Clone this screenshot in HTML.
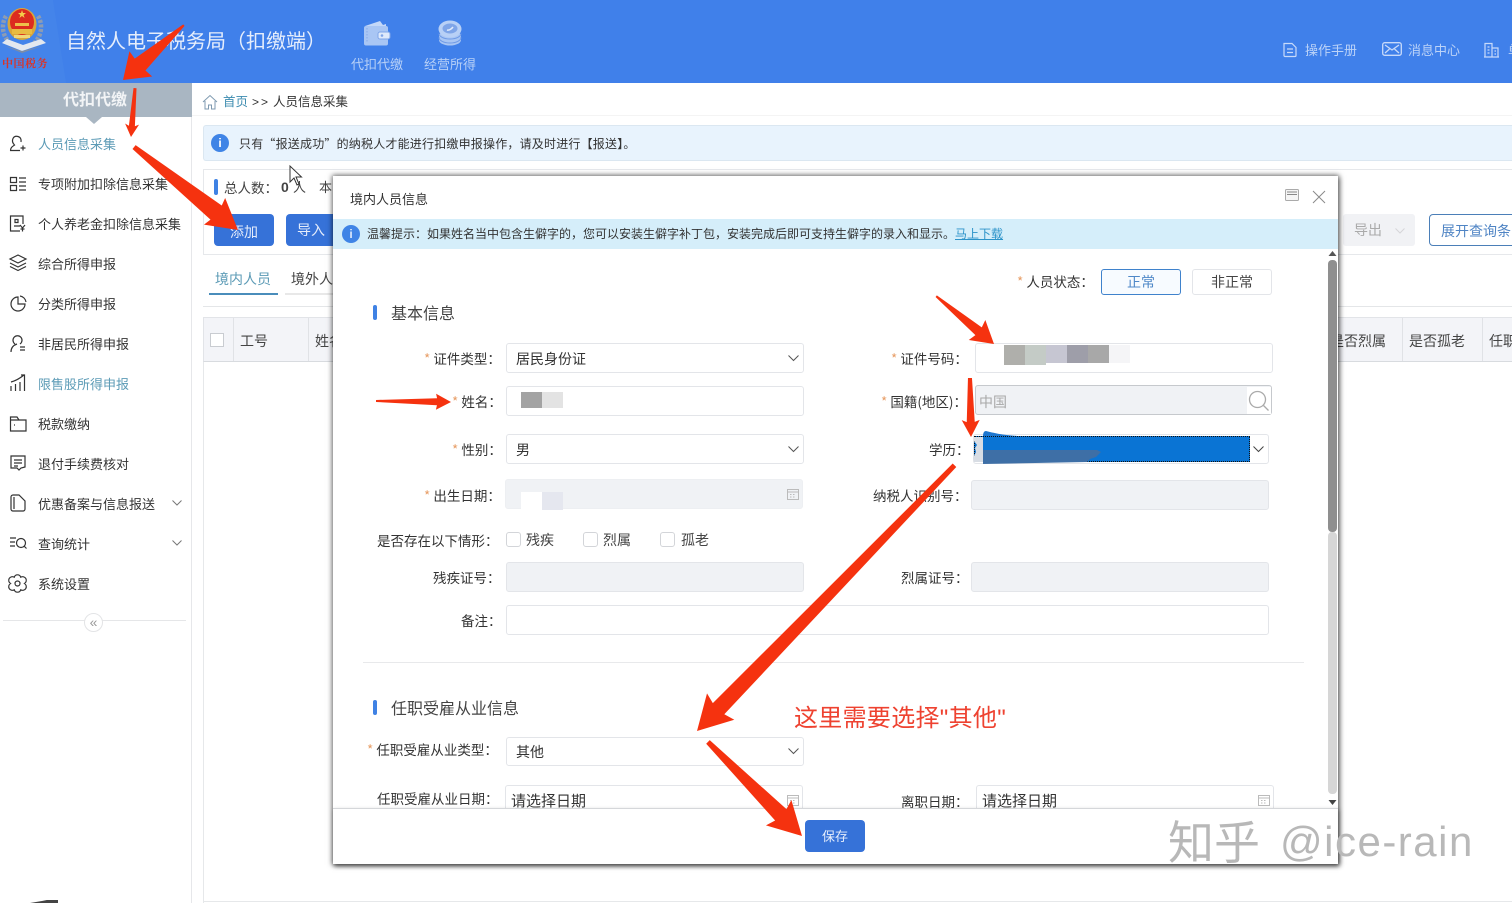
<!DOCTYPE html>
<html lang="zh-CN">
<head>
<meta charset="utf-8">
<title>自然人电子税务局（扣缴端）</title>
<style>
html,body{margin:0;padding:0;background:#fff}
body{width:1512px;height:903px;overflow:hidden;position:relative;font-family:"Liberation Sans","Noto Sans CJK SC",sans-serif;color:#333;font-size:13px}
.a{position:absolute}
.t{position:absolute;white-space:nowrap;line-height:20px}
.lab{position:absolute;white-space:nowrap;line-height:20px;color:#333;font-size:13.500px;font-family:"Noto Sans CJK TC","Noto Sans CJK SC",sans-serif;margin-top:-1px}
.lab b{color:#e8a06a;font-weight:400}
.box{position:absolute;box-sizing:border-box;background:#fff;border:1px solid #e3e5e9;border-radius:3px}
.dis{background:#f0f2f5}
.val{position:absolute;left:9px;top:15px;transform:translateY(-50%);font-size:14px;color:#333;white-space:nowrap}
svg{position:absolute;overflow:visible}
.ic{fill:none;stroke:#333;stroke-width:1.200}
.hd{position:absolute;white-space:nowrap;color:#444;font-size:16px;line-height:20px}
.sec{position:absolute;width:4px;height:15px;border-radius:2px;background:#3f82e4}
.chev{fill:none;stroke:#777;stroke-width:1}
.side{position:absolute;left:38px;white-space:nowrap;line-height:20px;color:#333}
</style>
</head>
<body>
<!-- top bar -->
<div class="a" style="left:0;top:0;width:1512px;height:83px;background:#4080ea"></div>
<div class="a" style="left:0;top:0;width:66px;height:83px;background:#4484ea;clip-path:polygon(0 0,80% 0,100% 100%,0 100%)"></div>

<svg style="left:0;top:0" width="60" height="75" viewBox="0 0 60 75">
  <path d="M6 16C1 24 2 36 10 43M38 16c5 8 4 20-4 27" fill="none" stroke="#8d9cb3" stroke-width="4.500" stroke-dasharray="3 1.500"/>
  <path d="M2 43l20 8 24-8-5-4-18 6-16-6z" fill="#e3e8ef"/>
  <path d="M5 46l17 7 20-7-20 5z" fill="#7f8da3"/>
  <ellipse cx="22" cy="24" rx="14.500" ry="16" fill="#d9a63a"/>
  <ellipse cx="22" cy="22" rx="12" ry="13" fill="#dc2c1f"/>
  <path d="M12 29h20v5H12z" fill="#e8bb42"/>
  <path d="M14 35h16v3H14z" fill="#f0d67a"/>
  <path d="M22 10l1 3h3l-2.400 2 1 3-2.600-2-2.600 2 1-3-2.400-2h3z" fill="#f3cf4a"/>
  <path d="M15 23h14v3H15z" fill="#eec04a"/>
</svg>
<div class="t" style="left:2px;top:54px;font-size:11px;color:#d8352a;font-weight:700;letter-spacing:.5px;font-family:'Liberation Serif','Noto Serif CJK SC',serif">中国税务</div>

<div class="t" style="left:66px;top:30px;font-size:20px;line-height:24px;color:#e6eefc">自然人电子税务局（扣缴端）</div>

<!-- wallet -->
<svg style="left:363px;top:20px" width="28" height="26" viewBox="0 0 28 26">
  <path d="M2 6 17 1l3 4 3-1v3z" fill="#c4d8f8"/>
  <rect x="1" y="6" width="24" height="19.500" rx="2" fill="#a9c6f4"/>
  <path d="M4 8v15" stroke="#88abe8" stroke-dasharray="1.500 1.500"/>
  <rect x="15" y="12" width="12" height="7" rx="2" fill="#dfeafb" stroke="#7fa5e8"/>
  <circle cx="19" cy="15.500" r="1.300" fill="#7fa5e8"/>
</svg>
<div class="t" style="left:351px;top:55px;color:#b7d0f7;font-size:13px">代扣代缴</div>
<!-- coins -->
<svg style="left:437px;top:20px" width="26" height="26" viewBox="0 0 26 26">
  <ellipse cx="13" cy="20" rx="11" ry="5.500" fill="#a9c6f4"/>
  <path d="M2 17.500a11 5.500 0 0 0 22 0" fill="none" stroke="#6f9ae6"/>
  <ellipse cx="13" cy="16" rx="11" ry="5.500" fill="#a9c6f4"/>
  <path d="M2 13.500a11 5.500 0 0 0 22 0" fill="none" stroke="#6f9ae6"/>
  <ellipse cx="13" cy="9" rx="11.500" ry="8.500" fill="#b8d0f6"/>
  <ellipse cx="13" cy="8.500" rx="7.500" ry="5" fill="#7fa5e8"/>
  <path d="M10 10c3 1 6-3 6-3" fill="none" stroke="#e2ecfc" stroke-width="1.500"/>
</svg>
<div class="t" style="left:424px;top:55px;color:#b7d0f7;font-size:13px">经营所得</div>

<svg style="left:1282px;top:42px" width="16" height="16" viewBox="0 0 16 16" fill="none" stroke="#c8dafa" stroke-width="1.200"><path d="M2 1.500h8l4 4v8a1 1 0 0 1-1 1H3a1 1 0 0 1-1-1z"/><path d="M5 7h6M5 10.500h6"/></svg>
<div class="t" style="left:1305px;top:41px;color:#bcd3f8;font-size:13px">操作手册</div>
<svg style="left:1382px;top:42px" width="20" height="14" viewBox="0 0 20 14" fill="none" stroke="#c8dafa" stroke-width="1.300"><rect x=".7" y=".7" width="18.600" height="12.600" rx="2"/><path d="M3 3l7 5 7-5M3 11l4.500-4M17 11l-4.500-4"/></svg>
<div class="t" style="left:1408px;top:41px;color:#bcd3f8;font-size:13px">消息中心</div>
<svg style="left:1483px;top:42px" width="16" height="16" viewBox="0 0 16 16" fill="none" stroke="#c8dafa" stroke-width="1.200"><path d="M1 15h15M2 15V1.500h7V15M9 6h6v9M4.500 5h2M4.500 8h2M4.500 11h2M11.500 9h1.500M11.500 12h1.500"/></svg>
<div class="t" style="left:1508px;top:41px;color:#bcd3f8;font-size:13px">单</div>

<!-- sidebar -->
<div class="a" style="left:0;top:83px;width:192px;height:34px;background:#a9b6c2"></div>
<svg style="left:86px;top:117px" width="16" height="7"><path d="M0 0h16L8 7z" fill="#a9b6c2"/></svg>
<div class="t" style="left:63px;top:90px;color:#f2f4f6;font-size:16px;font-weight:700;line-height:22px">代扣代缴</div>
<div class="a" style="left:191px;top:117px;width:1px;height:786px;background:#e6e7ea"></div>

<div class="side" style="top:135px;color:#5c9bb6">人员信息采集</div>
<div class="side" style="top:175px">专项附加扣除信息采集</div>
<div class="side" style="top:215px">个人养老金扣除信息采集</div>
<div class="side" style="top:255px">综合所得申报</div>
<div class="side" style="top:295px">分类所得申报</div>
<div class="side" style="top:335px">非居民所得申报</div>
<div class="side" style="top:375px;color:#5c9bb6">限售股所得申报</div>
<div class="side" style="top:415px">税款缴纳</div>
<div class="side" style="top:455px">退付手续费核对</div>
<div class="side" style="top:495px">优惠备案与信息报送</div>
<div class="side" style="top:535px">查询统计</div>
<div class="side" style="top:575px">系统设置</div>

<svg style="left:0;top:125px" width="30" height="480" viewBox="0 0 30 480">
  <g class="ic">
    <path d="M10 25.500h10M10.500 25.500c0-3 2-4 4-5.500-2-2-2.500-4.500-1.500-6.500 1-2 3-2.500 5-2 2.500.6 3.500 3 3 5.500M20.500 23h5M23 20.500v5"/>
    <path d="M10.500 52.500h6v5h-6zM10.500 60.500h6v5h-6zM19 53h7M19 57h7M19 61h7M19 65h7"/>
    <path d="M20 106H10.500V91H23v8M14 101h6M15 94.500h3v3h-3zM20 100l2.500 3 2.500-3M22.500 103v3.500M20.500 104h4"/>
    <path d="M18 130l8 4-8 4-8-4zM10 138l8 4 8-4M10 141.500l8 4 8-4"/>
    <path d="M25 179a7 7 0 1 1-7-7v7zM20 171a7 7 0 0 1 6 6"/>
    <path d="M15 219a4.500 4.500 0 1 1 5 0M11 227c0-5 3-7 6-8M20 222h5M20 225h5"/>
    <path d="M11 266v-5M15.500 266v-7M20 266v-9M24.500 266v-13M11 257c4-1 8-3 13-7M21 250h3.500v3.500"/>
    <path d="M10.500 295h15.500v11H10.500zM10.500 295v-3h6.500l2 3M14 300h1"/>
    <path d="M11 331h14v11l-4 1-2 2-2-2h-6zM14 335h8M14 338h8M14 341h4"/>
    <path d="M19 370H13a2 2 0 0 0-2 2v12a2 2 0 0 0 2 2h10a2 2 0 0 0 2-2V376zM14 372v12"/>
    <path d="M10 413h6M10 417h5M10 421h5"/>
    <circle cx="21" cy="418" r="4.500"/><path d="M24 421l2.500 2.500"/>
    <circle cx="17.500" cy="458.500" r="2.500"/>
    <path d="M20.750 452.200A3.400 3.400 0 0 1 24.500 458.500 3.400 3.400 0 0 1 20.750 464.800 3.400 3.400 0 0 1 14.250 464.800 3.400 3.400 0 0 1 10.500 458.500 3.400 3.400 0 0 1 14.250 452.200 3.400 3.400 0 0 1 20.750 452.200z"/>
  </g>
</svg>
<svg style="left:172px;top:500px" width="10" height="6"><path class="chev" d="M.5.500l4.500 4.500 4.500-4.500"/></svg>
<svg style="left:172px;top:540px" width="10" height="6"><path class="chev" d="M.5.500l4.500 4.500 4.500-4.500"/></svg>
<div class="a" style="left:3px;top:620px;width:183px;height:1px;background:#e5e6e8"></div>
<div class="a" style="left:84px;top:613px;width:19px;height:19px;border-radius:50%;background:#fff;border:1px solid #e3e4e6;box-sizing:border-box;text-align:center;line-height:16px;color:#999;font-size:14px">«</div>

<!-- breadcrumb -->
<svg style="left:202px;top:94px" width="16" height="16" viewBox="0 0 16 16" fill="none" stroke="#7f9ab0" stroke-width="1"><path d="M1 8l7-6.500L15 8M3 7v8h3.500v-4h3v4H13V7"/></svg>
<div class="t" style="left:223px;top:92px;color:#3d8cb0;font-size:12.500px">首页</div>
<div class="t" style="left:252px;top:92px;color:#333;font-size:12px;letter-spacing:2px">&gt;&gt;</div>
<div class="t" style="left:273px;top:92px;color:#333;font-size:12.500px">人员信息采集</div>
<div class="a" style="left:192px;top:115px;width:1320px;height:1px;background:#f4f4f4"></div>

<!-- notice -->
<div class="a" style="left:203px;top:125px;width:1309px;height:36px;box-sizing:border-box;background:#e8f3fd;border:1px solid #dbe7f1;border-right:none;border-radius:3px 0 0 3px"></div>
<div class="a" style="left:211px;top:134px;width:18px;height:18px;border-radius:50%;background:#3f84e6;color:#fff;font-size:12px;font-weight:700;text-align:center;line-height:18px">i</div>
<div class="t" style="left:239px;top:134px;color:#333;font-size:12px;letter-spacing:.2px;font-family:'Noto Sans CJK SC',sans-serif">只有“报送成功”的纳税人才能进行扣缴申报操作，请及时进行【报送】。</div>

<!-- toolbar -->
<div class="a" style="left:203px;top:169px;width:1309px;height:86px;box-sizing:border-box;border:1px solid #e6e8eb;border-right:none"></div>
<div class="a" style="left:214px;top:179px;width:4px;height:16px;border-radius:2px;background:#3f82e4"></div>
<div class="t" style="left:224px;top:177px;color:#444;font-size:13.500px;font-family:'Noto Sans CJK TC',sans-serif">总人数：</div>
<div class="t" style="left:281px;top:177px;color:#444;font-size:14px;font-weight:700">0</div>
<div class="t" style="left:293px;top:178px;color:#444">人</div>
<div class="t" style="left:319px;top:178px;color:#444">本</div>
<div class="a" style="left:214px;top:214px;width:60px;height:32px;border-radius:4px;background:#3672d8;color:#e4ecfb;text-align:center;line-height:36px;font-size:14px">添加</div>
<div class="a" style="left:286px;top:214px;width:60px;height:32px;border-radius:4px;background:#3672d8;color:#e4ecfb;text-align:center;line-height:32px;font-size:14px;padding-right:10px;box-sizing:border-box">导入</div>
<div class="a" style="left:1343px;top:214px;width:72px;height:32px;border-radius:3px;background:#f1f2f5"></div>
<div class="t" style="left:1354px;top:220px;color:#aaa;font-size:14px">导出</div>
<svg style="left:1395px;top:228px" width="10" height="6"><path d="M.5.500l4.500 4.500 4.500-4.500" fill="none" stroke="#d5d5d8"/></svg>
<div class="a" style="left:1429px;top:214px;width:100px;height:32px;box-sizing:border-box;border:1px solid #4b7fb8;border-radius:4px"></div>
<div class="t" style="left:1441px;top:221px;color:#4f84c4;font-size:14px">展开查询条</div>

<!-- tabs -->
<div class="t" style="left:215px;top:269px;color:#5c9bb6;font-size:14px">境内人员</div>
<div class="t" style="left:291px;top:269px;color:#444;font-size:14px">境外人员</div>
<div class="a" style="left:209px;top:293px;width:69px;height:2px;background:#4a8dbb"></div>
<div class="a" style="left:285px;top:293px;width:60px;height:2px;background:#e8e8e8"></div>
<div class="a" style="left:203px;top:306px;width:1309px;height:1px;background:#e4e6e8"></div>

<!-- table -->
<div class="a" style="left:203px;top:317px;width:1309px;height:45px;box-sizing:border-box;background:#f3f4f8;border:1px solid #e2e4e8;border-bottom:1px solid #d8dbdf;border-right:none"></div>
<div class="a" style="left:233px;top:318px;width:1px;height:43px;background:#e0e2e6"></div>
<div class="a" style="left:308px;top:318px;width:1px;height:43px;background:#e0e2e6"></div>
<div class="a" style="left:1402px;top:318px;width:1px;height:43px;background:#e0e2e6"></div>
<div class="a" style="left:1482px;top:318px;width:1px;height:43px;background:#e0e2e6"></div>
<div class="a" style="left:210px;top:333px;width:14px;height:14px;box-sizing:border-box;border:1px solid #c9ccd1;background:#fff"></div>
<div class="t" style="left:240px;top:331px;color:#444;font-size:14px">工号</div>
<div class="t" style="left:315px;top:331px;color:#444;font-size:14px">姓名</div>
<div class="t" style="left:1330px;top:331px;color:#444;font-size:14px">是否烈属</div>
<div class="t" style="left:1409px;top:331px;color:#444;font-size:14px">是否孤老</div>
<div class="t" style="left:1489px;top:331px;color:#444;font-size:14px">任职</div>
<div class="a" style="left:203px;top:362px;width:1px;height:541px;background:#e6e8ea"></div>
<div class="a" style="left:203px;top:901px;width:1309px;height:1px;background:#e6e8ea"></div>

<!-- modal -->
<div class="a" style="left:333px;top:176px;width:1005px;height:688px;background:#fff;box-shadow:0 0 5px 1px rgba(0,0,0,.55),2px 2px 5px rgba(0,0,0,.3)"></div>
<div class="t" style="left:350px;top:190px;color:#333;font-size:13px">境内人员信息</div>
<svg style="left:1285px;top:189px" width="14" height="12" viewBox="0 0 14 12"><rect x=".5" y=".5" width="13" height="11" rx="1" fill="#f5f5f5" stroke="#aaa"/><path d="M2 3h10M2 5.500h10" stroke="#888"/></svg>
<svg style="left:1312px;top:190px" width="14" height="14" viewBox="0 0 14 14"><path d="M1 1l12 12M13 1L1 13" stroke="#8a8a8a" stroke-width="1"/></svg>
<div class="a" style="left:333px;top:219px;width:1005px;height:30px;background:#d5eefa"></div>
<div class="a" style="left:342px;top:225px;width:18px;height:18px;border-radius:50%;background:#3f84e6;color:#dce9fb;font-size:12px;font-weight:700;text-align:center;line-height:18px">i</div>
<div class="t" style="left:367px;top:224px;color:#333;font-size:12px">温馨提示：如果姓名当中包含生僻字的，您可以安装生僻字补丁包，安装完成后即可支持生僻字的录入和显示。<span style="color:#2c93c9;text-decoration:underline">马上下载</span></div>

<!-- scrollbar -->
<div class="a" style="left:1328px;top:260px;width:9px;height:272px;border-radius:4px;background:#8f8f8f"></div>
<div class="a" style="left:1328px;top:532px;width:9px;height:262px;border-radius:4px;background:#d6d6d6"></div>
<svg style="left:1327px;top:250px" width="11" height="6"><path d="M1.500 6h8l-4-5z" fill="#555"/></svg>

<div class="lab" style="left:1017px;top:272px"><b>*</b> 人员状态：</div>
<div class="box" style="left:1101px;top:269px;width:80px;height:26px;border:1px solid #3f82cc;text-align:center;line-height:24px;color:#4f88c8;font-size:14px;background:#f7fbff">正常</div>
<div class="box" style="left:1192px;top:269px;width:80px;height:26px;text-align:center;line-height:24px;color:#444;font-size:14px">非正常</div>

<div class="sec" style="left:373px;top:305px"></div>
<div class="hd" style="left:391px;top:305px">基本信息</div>

<div class="lab" style="left:424px;top:349px"><b>*</b> 证件类型：</div>
<div class="box" style="left:506px;top:343px;width:298px;height:30px"><span class="val">居民身份证</span></div>
<svg style="left:788px;top:355px" width="11" height="7"><path d="M.5.500l5 5 5-5" fill="none" stroke="#555"/></svg>

<div class="lab" style="left:891px;top:349px"><b>*</b> 证件号码：</div>
<div class="box" style="left:975px;top:343px;width:298px;height:30px"></div>
<div class="a" style="left:976px;top:345px;width:28px;height:21px;background:#fff"></div>
<div class="a" style="left:1004px;top:345px;width:21px;height:20px;background:#afafab"></div>
<div class="a" style="left:1025px;top:345px;width:21px;height:20px;background:#c4cbc6"></div>
<div class="a" style="left:1046px;top:345px;width:21px;height:18px;background:#c6c6d2"></div>
<div class="a" style="left:1067px;top:345px;width:21px;height:18px;background:#9e9ea9"></div>
<div class="a" style="left:1088px;top:345px;width:21px;height:18px;background:#a8a8a8"></div>
<div class="a" style="left:1109px;top:345px;width:21px;height:18px;background:#f5f5f7"></div>

<div class="lab" style="left:452px;top:392px"><b>*</b> 姓名：</div>
<div class="box" style="left:506px;top:386px;width:298px;height:30px"></div>
<div class="a" style="left:521px;top:392px;width:21px;height:16px;background:#a3a3a3"></div>
<div class="a" style="left:542px;top:392px;width:21px;height:16px;background:#e3e3e3"></div>

<div class="lab" style="left:881px;top:392px"><b>*</b> 国籍(地区)：</div>
<div class="box dis" style="left:975px;top:385px;width:297px;height:30px;border-color:#c6c9cd"><span class="val" style="left:3px;top:16px;color:#a8a8a8;font-size:14px">中国</span></div>
<div class="a" style="left:1247px;top:387px;width:24px;height:27px;background:#fff"></div>
<svg style="left:1248px;top:390px" width="22" height="22" viewBox="0 0 22 22" fill="none" stroke="#aaa" stroke-width="1.300"><circle cx="9.500" cy="9.500" r="8"/><path d="M15.500 15.500l5 5"/></svg>

<div class="lab" style="left:452px;top:440px"><b>*</b> 性别：</div>
<div class="box" style="left:506px;top:434px;width:298px;height:30px"><span class="val">男</span></div>
<svg style="left:788px;top:446px" width="11" height="7"><path d="M.5.500l5 5 5-5" fill="none" stroke="#555"/></svg>

<div class="lab" style="left:929px;top:440px">学历：</div>
<div class="box" style="left:973px;top:434px;width:296px;height:30px"></div>
<div class="a" style="left:974px;top:436px;width:276px;height:26px;background:#0a74d4;box-sizing:border-box;border:1px dotted #111"></div>
<svg style="left:0;top:0" width="1512" height="903" viewBox="0 0 1512 903">
  <path d="M983 436c0-3 1-5 3-5 8 2 16 4 32 5z" fill="#1c76cf"/>
  <path d="M983 450h114l4 2-5 5-6 2-3 3-104 2z" fill="#3e6fa6"/>
  <path d="M974 437h9v25h-9l-1-4 3-6-1-4 2-3-3-4z" fill="#d8dde4"/>
</svg>
<svg style="left:1253px;top:446px" width="11" height="7"><path d="M.5.500l5 5 5-5" fill="none" stroke="#444"/></svg>

<div class="lab" style="left:424px;top:486px"><b>*</b> 出生日期：</div>
<div class="box dis" style="left:505px;top:479px;width:298px;height:30px;border-color:#edeff2"></div>
<div class="a" style="left:521px;top:492px;width:21px;height:18px;background:#fff"></div>
<div class="a" style="left:542px;top:492px;width:21px;height:18px;background:#e5e7ef"></div>
<svg style="left:787px;top:488px" width="12" height="12" viewBox="0 0 12 12" fill="none" stroke="#bbb"><rect x=".5" y="1.500" width="11" height="10"/><path d="M.5 4h11M3 6.500h1.500M6 6.500h1.500M3 9h1.500M6 9h1.500"/></svg>

<div class="lab" style="left:873px;top:486px">纳税人识别号：</div>
<div class="box dis" style="left:971px;top:480px;width:298px;height:30px"></div>

<div class="lab" style="left:377px;top:531px">是否存在以下情形：</div>
<div class="box" style="left:506px;top:532px;width:15px;height:15px;border-color:#d3d5d9"></div>
<div class="t" style="left:526px;top:530px;color:#444;font-size:14px">残疾</div>
<div class="box" style="left:583px;top:532px;width:15px;height:15px;border-color:#d3d5d9"></div>
<div class="t" style="left:603px;top:530px;color:#444;font-size:14px">烈属</div>
<div class="box" style="left:660px;top:532px;width:15px;height:15px;border-color:#d3d5d9"></div>
<div class="t" style="left:681px;top:530px;color:#444;font-size:14px">孤老</div>

<div class="lab" style="left:433px;top:568px">残疾证号：</div>
<div class="box dis" style="left:506px;top:562px;width:298px;height:30px"></div>
<div class="lab" style="left:901px;top:568px">烈属证号：</div>
<div class="box dis" style="left:971px;top:562px;width:298px;height:30px"></div>

<div class="lab" style="left:461px;top:611px">备注：</div>
<div class="box" style="left:506px;top:605px;width:763px;height:30px"></div>

<div class="a" style="left:363px;top:662px;width:941px;height:1px;background:#e8e9eb"></div>

<div class="sec" style="left:373px;top:700px"></div>
<div class="hd" style="left:391px;top:700px">任职受雇从业信息</div>

<div class="lab" style="left:367px;top:740px"><b>*</b> 任职受雇从业类型：</div>
<div class="box" style="left:506px;top:737px;width:298px;height:29px"><span class="val" style="top:14px">其他</span></div>
<svg style="left:788px;top:748px" width="11" height="7"><path d="M.5.500l5 5 5-5" fill="none" stroke="#555"/></svg>

<div class="lab" style="left:377px;top:789px">任职受雇从业日期：</div>
<div class="box" style="left:505px;top:785px;width:298px;height:30px"></div>
<div class="t" style="left:511px;top:792px;color:#333;font-size:15px">请选择日期</div>
<svg style="left:787px;top:794px" width="12" height="12" viewBox="0 0 12 12" fill="none" stroke="#bbb"><rect x=".5" y="1.500" width="11" height="10"/><path d="M.5 4h11M3 6.500h1.500M6 6.500h1.500M3 9h1.500M6 9h1.500"/></svg>
<div class="lab" style="left:901px;top:792px">离职日期：</div>
<div class="box" style="left:976px;top:785px;width:298px;height:30px"></div>
<div class="t" style="left:982px;top:792px;color:#333;font-size:15px">请选择日期</div>
<svg style="left:1258px;top:794px" width="12" height="12" viewBox="0 0 12 12" fill="none" stroke="#bbb"><rect x=".5" y="1.500" width="11" height="10"/><path d="M.5 4h11M3 6.500h1.500M6 6.500h1.500M3 9h1.500M6 9h1.500"/></svg>

<!-- modal footer -->
<div class="a" style="left:333px;top:808px;width:1005px;height:56px;background:#fff;border-top:1px solid #d5d7da;box-sizing:border-box;box-shadow:1px 2px 4px rgba(0,0,0,.35)"></div>
<svg style="left:1327px;top:800px" width="11" height="6"><path d="M1.500 0h8l-4 5z" fill="#444"/></svg>
<div class="a" style="left:805px;top:820px;width:60px;height:32px;border-radius:4px;background:#3672d8;color:#e6eefc;text-align:center;line-height:34px;font-size:13px">保存</div>

<!-- red annotation -->
<div class="t" style="left:794px;top:704px;color:#ee4230;font-size:24px;line-height:30px;letter-spacing:.3px">这里需要选择"其他"</div>

<!-- arrows -->
<svg style="left:0;top:0" width="1512" height="903" viewBox="0 0 1512 903">
  <g fill="#f5320f">
    <polygon transform="translate(123,80) rotate(137.960)" points="0,0 -24,-17 -23,-8 -82,-1 -82,1 -23,8 -24,17"/>
    <polygon transform="translate(131,137) rotate(94.700)" points="0,0 -13,-7 -11,-3 -49,-1.500 -49,1.500 -11,3 -13,7"/>
    <polygon transform="translate(238,230) rotate(38.600)" points="0,0 -30,-17 -28,-9 -133,-2.500 -133,2.500 -28,9 -30,17"/>
    <polygon transform="translate(994,344) rotate(39.600)" points="0,0 -22,-13 -20,-5 -75,-1 -75,1 -20,5 -22,13"/>
    <polygon transform="translate(451,402) rotate(.800)" points="0,0 -15,-8 -14,-3.500 -75,-1 -75,1 -14,3.500 -15,8"/>
    <polygon transform="translate(971,437) rotate(89)" points="0,0 -17,-9 -15,-4 -59,-2 -59,2 -15,4 -17,9"/>
    <polygon transform="translate(697,731) rotate(134.100)" points="0,0 -34,-19 -31,-8 -370,-2.500 -370,2.500 -31,8 -34,19"/>
    <polygon transform="translate(802,836) rotate(45)" points="0,0 -33,-18 -30,-8 -133,-2.500 -133,2.500 -30,8 -33,18"/>
  </g>
</svg>

<!-- mouse cursor -->
<svg style="left:289px;top:165px" width="14" height="22" viewBox="0 0 14 22"><path d="M1 1v16l4-4 3 7 2-1-3-7h5.500z" fill="#fff" stroke="#333"/></svg>

<!-- watermark -->
<div class="t" style="left:1168px;top:819px;font-size:46px;line-height:48px;color:#b8b8b8">知乎</div>
<div class="t" style="left:1280px;top:818px;font-size:42px;line-height:48px;color:#b8b8b8;letter-spacing:1.500px">@ice-rain</div>

<div class="a" style="left:30px;top:900px;width:28px;height:3px;background:#444;clip-path:polygon(0 100%,45% 30%,60% 0,100% 0,100% 100%)"></div>
</body>
</html>
